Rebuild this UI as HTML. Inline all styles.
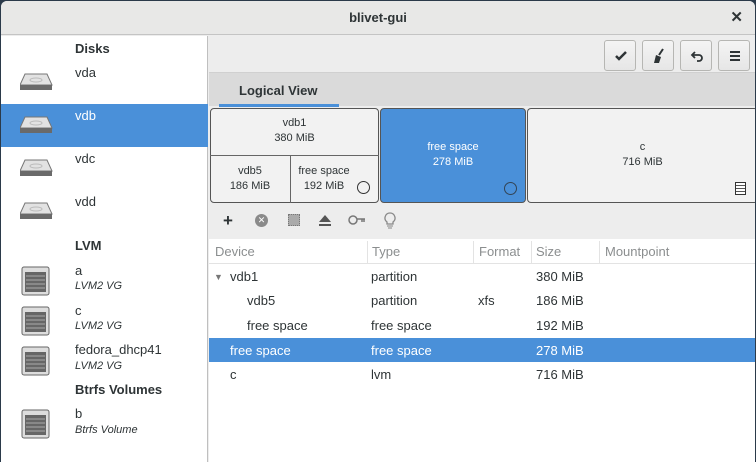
<!DOCTYPE html>
<html><head><meta charset="utf-8"><style>
*{margin:0;padding:0;box-sizing:border-box}
body{width:756px;height:462px;overflow:hidden;font-family:"Liberation Sans",sans-serif;font-size:13px;color:#2e3436;background:#2b3a4a;position:relative}
.a{position:absolute}
.win{left:1px;top:1px;width:754px;height:461px;background:#ededed;border-radius:6px 6px 0 0;overflow:hidden}
.title{left:0;top:0;width:754px;height:34px;background:#e8e8e7;border-bottom:1px solid #c4c4c4;text-align:center;line-height:34px;font-weight:bold}
.side{left:0;top:35px;width:207px;height:426px;background:#fff;border-right:1px solid #bfbfbf}
.hdr{font-weight:bold}
.it{font-style:italic;font-size:11px}
.btn{top:39px;width:32px;height:31px;border:1px solid #b6b6b3;border-radius:3px;background:linear-gradient(#f4f4f4,#e6e6e6);text-align:center;line-height:29px;font-size:13px}
.btn svg{position:absolute;left:8px;top:7px}
.box{border:1px solid #555;border-radius:4px;background:#f2f2f2;text-align:center;font-size:11px;line-height:15px}
.cell{position:absolute;font-size:13px}
.th{color:#8b8e8f;font-size:13px}
</style></head><body>
<div class="a win">
<div class="a title">blivet-gui<span class="a" style="right:12px;top:0;font-size:15px">✕</span></div>
<div class="a side">
<div class="a hdr" style="left:74px;top:5px">Disks</div>
<div class="a" style="left:0;top:68px;width:207px;height:43px;background:#4a90d9"></div>
<div class="a" style="left:74px;top:29px">vda</div>
<div class="a" style="left:74px;top:72px;color:#fff">vdb</div>
<div class="a" style="left:74px;top:115px">vdc</div>
<div class="a" style="left:74px;top:158px">vdd</div>
<div class="a hdr" style="left:74px;top:202px">LVM</div>
<div class="a" style="left:74px;top:227px">a</div><div class="a it" style="left:74px;top:244px">LVM2 VG</div>
<div class="a" style="left:74px;top:267px">c</div><div class="a it" style="left:74px;top:284px">LVM2 VG</div>
<div class="a" style="left:74px;top:306px">fedora_dhcp41</div><div class="a it" style="left:74px;top:324px">LVM2 VG</div>
<div class="a hdr" style="left:74px;top:346px">Btrfs Volumes</div>
<div class="a" style="left:74px;top:370px">b</div><div class="a it" style="left:74px;top:388px">Btrfs Volume</div>
<svg class="a" style="left:19px;top:35px" width="36" height="190">
<g id="d"><path d="M5 3h22l5 11H0z" fill="#e2e2e2" stroke="#777"/><rect x="0" y="14" width="32" height="5" fill="#6a6a6a"/><ellipse cx="16" cy="9" rx="6" ry="2" fill="none" stroke="#bbb"/></g>
<use href="#d" y="43"/><use href="#d" y="86"/><use href="#d" y="129"/>
</svg>
<svg class="a" style="left:20px;top:230px" width="34" height="180">
<g id="s"><rect x="1" y="1" width="27" height="28" rx="2" fill="#ddd" stroke="#666"/><rect x="4" y="6" width="21" height="20" fill="#666"/><path d="M5 10h19M5 14h19M5 18h19M5 22h19" stroke="#aaa"/></g>
<use href="#s" y="40"/><use href="#s" y="80"/><use href="#s" y="143"/>
</svg>
</div>
<div class="a" style="left:208px;top:35px;width:546px;height:37px;background:#ededed;border-bottom:1px solid #d0d0d0"></div>
<div class="a btn" style="left:603px"><svg width="16" height="16"><path d="M3 8l3 3 7-7" fill="none" stroke="#2e3436" stroke-width="2.5"/></svg></div>
<div class="a btn" style="left:641px"><svg width="16" height="16"><path d="M12 1L8 7" stroke="#2e3436" stroke-width="2"/><path d="M5 7l5 2-2 6H3z" fill="#2e3436"/></svg></div>
<div class="a btn" style="left:679px"><svg width="16" height="16"><path d="M6 4L3 7l3 3M3 7h7a3 3 0 0 1 0 6H8" fill="none" stroke="#2e3436" stroke-width="1.8"/></svg></div>
<div class="a btn" style="left:717px"><svg width="16" height="16"><path d="M3 4h10M3 8h10M3 12h10" stroke="#2e3436" stroke-width="2"/></svg></div>
<div class="a" style="left:208px;top:72px;width:546px;height:33px;background:#dadada"></div>
<div class="a hdr" style="left:238px;top:82px">Logical View</div>
<div class="a" style="left:218px;top:103px;width:120px;height:3px;background:#4a90d9"></div>
<div class="a" style="left:208px;top:106px;width:546px;height:356px;background:#ededed"></div>
<div class="a box" style="left:209px;top:107px;width:169px;height:95px"></div>
<div class="a" style="left:209px;top:115px;width:169px;text-align:center;font-size:11px;line-height:15px">vdb1<br>380 MiB</div>
<div class="a" style="left:209px;top:154px;width:169px;border-top:1px solid #666"></div>
<div class="a" style="left:289px;top:154px;height:48px;border-left:1px solid #666"></div>
<div class="a" style="left:209px;top:163px;width:80px;text-align:center;font-size:11px;line-height:15px">vdb5<br>186 MiB</div>
<div class="a" style="left:289px;top:163px;width:68px;text-align:center;font-size:11px;line-height:15px">free space<br>192 MiB</div>
<div class="a" style="left:356px;top:180px;width:13px;height:13px;border:1px solid #333;border-radius:50%"></div>
<div class="a box" style="left:379px;top:107px;width:146px;height:95px;background:#4a90d9;color:#fff;padding-top:31px">free space<br>278 MiB</div>
<div class="a" style="left:503px;top:181px;width:13px;height:13px;border:1px solid #345;border-radius:50%"></div>
<div class="a box" style="left:526px;top:107px;width:231px;height:95px;padding-top:31px;border-right:1px dashed #999">c<br>716 MiB</div>
<div class="a" style="left:734px;top:181px;width:11px;height:13px;border:1px solid #333;background:repeating-linear-gradient(#fff 0 2px,#555 2px 3px)"></div>
<div class="a" style="left:222px;top:210px;font-size:17px;font-weight:bold">+</div>
<div class="a" style="left:254px;top:213px;width:13px;height:13px;border-radius:50%;background:#8a8a8a;color:#fff;font-size:9px;text-align:center;line-height:13px">✕</div>
<div class="a" style="left:287px;top:213px;width:12px;height:12px;border:1px dotted #777;background:#aaa"></div>
<svg class="a" style="left:317px;top:212px" width="14" height="14"><path d="M7 2l6 7H1z" fill="#555"/><rect x="1" y="11" width="12" height="2" fill="#555"/></svg>
<svg class="a" style="left:347px;top:213px" width="18" height="12"><circle cx="5" cy="6" r="4" fill="none" stroke="#777" stroke-width="1.5"/><path d="M9 5h8M14 5v3M16 5v3" stroke="#777" stroke-width="1.5"/></svg>
<svg class="a" style="left:383px;top:211px" width="12" height="17"><path d="M6 1a5 5 0 0 0-3 9v2h6v-2a5 5 0 0 0-3-9z" fill="none" stroke="#888" stroke-width="1.3"/><path d="M3 14h6M4 16h4" stroke="#888"/></svg>
<div class="a" style="left:208px;top:238px;width:546px;height:224px;background:#fff"></div>
<div class="a" style="left:208px;top:262px;width:546px;border-top:1px solid #e3e3e3"></div>
<div class="a" style="left:366px;top:240px;height:22px;border-left:1px solid #e3e3e3"></div>
<div class="a" style="left:472px;top:240px;height:22px;border-left:1px solid #e3e3e3"></div>
<div class="a" style="left:530px;top:240px;height:22px;border-left:1px solid #e3e3e3"></div>
<div class="a" style="left:598px;top:240px;height:22px;border-left:1px solid #e3e3e3"></div>
<div class="cell th" style="left:214px;top:243px">Device</div>
<div class="cell th" style="left:371px;top:243px">Type</div>
<div class="cell th" style="left:478px;top:243px">Format</div>
<div class="cell th" style="left:535px;top:243px">Size</div>
<div class="cell th" style="left:604px;top:243px">Mountpoint</div>
<div class="a" style="left:208px;top:337px;width:546px;height:24px;background:#4a90d9"></div>
<div class="cell" style="left:213px;top:271px;font-size:9px;color:#777">▼</div>
<div class="cell" style="left:229px;top:268px">vdb1</div><div class="cell" style="left:370px;top:268px">partition</div><div class="cell" style="left:535px;top:268px">380 MiB</div>
<div class="cell" style="left:246px;top:292px">vdb5</div><div class="cell" style="left:370px;top:292px">partition</div><div class="cell" style="left:477px;top:292px">xfs</div><div class="cell" style="left:535px;top:292px">186 MiB</div>
<div class="cell" style="left:246px;top:317px">free space</div><div class="cell" style="left:370px;top:317px">free space</div><div class="cell" style="left:535px;top:317px">192 MiB</div>
<div class="cell" style="left:229px;top:342px;color:#fff">free space</div><div class="cell" style="left:370px;top:342px;color:#fff">free space</div><div class="cell" style="left:535px;top:342px;color:#fff">278 MiB</div>
<div class="cell" style="left:229px;top:366px">c</div><div class="cell" style="left:370px;top:366px">lvm</div><div class="cell" style="left:535px;top:366px">716 MiB</div>
</div>
</body></html>
